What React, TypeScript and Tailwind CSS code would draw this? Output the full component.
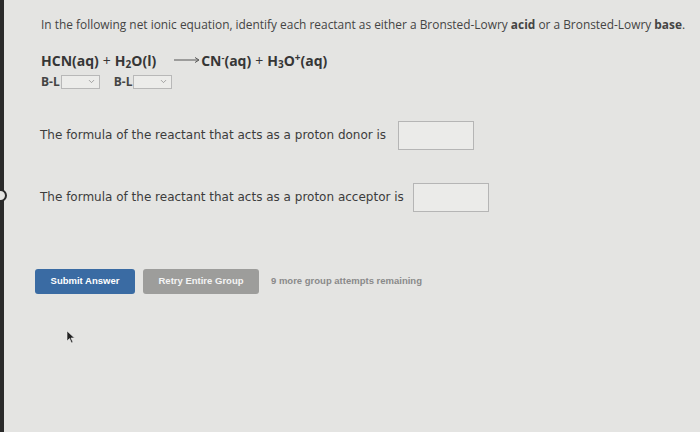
import { ChevronDown } from 'lucide-react';

function BLSelect() {
  return (
    <div className="flex items-center">
      <span className="text-[12px] font-bold text-[#444]">B-L</span>
      <div className="ml-[1px] flex h-[14px] w-[39px] items-center justify-end border border-[#b8b8b8] bg-[#ececea] pr-[3px]">
        <ChevronDown size={9} strokeWidth={2} className="text-[#8a8a8a]" />
      </div>
    </div>
  );
}

function AnswerBox() {
  return <div className="h-[29px] w-[76px] border border-[#b5b5b5] bg-[#ebebe9]" />;
}

export default function App() {
  return (
    <div className="relative h-[432px] w-[700px] overflow-hidden bg-[#e4e4e2] font-['Open_Sans',sans-serif] text-[#444]">
      {/* dark edge of the screen */}
      <div className="absolute left-0 top-0 h-full w-[4px] bg-[#2a2a2a]" />
      <div className="absolute left-[-6px] top-[189px] h-[13px] w-[13px] rounded-full border-2 border-[#2a2a2a] bg-[#e4e4e2]" />

      <div className="pl-[41px] pt-[16px]">
        <p className="text-[11.9px]">
          In the following net ionic equation, identify each reactant as either a Bronsted-Lowry <b>acid</b> or a
          Bronsted-Lowry <b>base</b>.
        </p>

        <div className="mt-[16px] flex items-center text-[14px] font-bold text-[#363636]">
          <span>HCN(aq)</span>
          <span className="mx-[4px] font-normal">+</span>
          <span>
            H<sub className="text-[10px]">2</sub>O(l)
          </span>
          <svg width="26" height="8" viewBox="0 0 26 8" className="ml-[18px] mr-[1px]">
            <line x1="0" y1="4" x2="24" y2="4" stroke="#555" strokeWidth="1" />
            <path d="M21 1.5 L25 4 L21 6.5" fill="none" stroke="#555" strokeWidth="1" />
          </svg>
          <span>
            CN<sup className="text-[9px]">-</sup>(aq)
          </span>
          <span className="mx-[4px] font-normal">+</span>
          <span>
            H<sub className="text-[10px]">3</sub>O<sup className="text-[10px]">+</sup>(aq)
          </span>
        </div>

        <div className="mt-[2px] flex items-center gap-[14px]">
          <BLSelect />
          <BLSelect />
        </div>
      </div>

      <div className="pl-[40px] font-['DejaVu_Sans',Verdana,sans-serif] text-[12px] text-[#3c3c3c]">
        <div className="mt-[30px] flex items-center gap-[12px]">
          <span>The formula of the reactant that acts as a proton donor is</span>
          <AnswerBox />
        </div>
        <div className="mt-[33px] flex items-center gap-[9px]">
          <span>The formula of the reactant that acts as a proton acceptor is</span>
          <AnswerBox />
        </div>
      </div>

      <div className="mt-[57px] flex items-center pl-[35px] font-['Liberation_Sans',Arial,sans-serif] font-bold">
        <div className="flex h-[25px] w-[100px] items-center justify-center rounded-[3px] bg-[#3a6ba3] text-[9.5px] text-white">
          Submit Answer
        </div>
        <div className="ml-[8px] flex h-[25px] w-[116px] items-center justify-center rounded-[3px] bg-[#9d9d9b] text-[9.5px] text-[#f4f4f4]">
          Retry Entire Group
        </div>
        <span className="ml-[12px] text-[9.5px] text-[#8a8a8a]">9 more group attempts remaining</span>
      </div>

      <svg width="10" height="14" viewBox="0 0 10 14" className="absolute left-[66px] top-[330px]">
        <path d="M1 1 L1 11 L3.5 8.5 L5.5 13 L7 12.3 L5 8 L8.5 8 Z" fill="#222" stroke="#eee" strokeWidth="0.6" />
      </svg>
    </div>
  );
}
